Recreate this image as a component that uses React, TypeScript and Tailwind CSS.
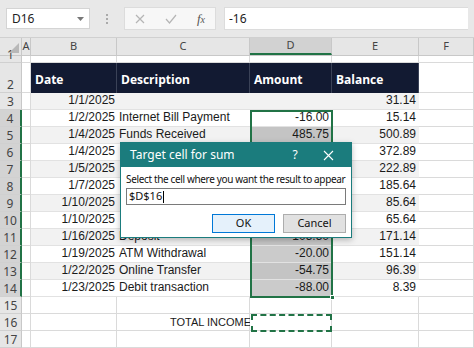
import React from "react";

const cols = [
  { key: "A", w: "w-[9px]" },
  { key: "B", w: "w-[86px]" },
  { key: "C", w: "w-[133px]" },
  { key: "D", w: "w-[82px]" },
  { key: "E", w: "w-[87px]" },
  { key: "F", w: "flex-1" },
];

type Row = { n: number; date: string; desc: string; amt: string; bal: string };

// rows 6-10 sit under the dialog, so only their dates and balances show
const rows: Row[] = [
  { n: 3, date: "1/1/2025", desc: "", amt: "", bal: "31.14" },
  { n: 4, date: "1/2/2025", desc: "Internet Bill Payment", amt: "-16.00", bal: "15.14" },
  { n: 5, date: "1/4/2025", desc: "Funds Received", amt: "485.75", bal: "500.89" },
  { n: 6, date: "1/4/2025", desc: "", amt: "", bal: "372.89" },
  { n: 7, date: "1/5/2025", desc: "", amt: "", bal: "222.89" },
  { n: 8, date: "1/7/2025", desc: "", amt: "", bal: "185.64" },
  { n: 9, date: "1/10/2025", desc: "", amt: "", bal: "85.64" },
  { n: 10, date: "1/10/2025", desc: "", amt: "", bal: "65.64" },
  { n: 11, date: "1/16/2025", desc: "Deposit", amt: "105.50", bal: "171.14" },
  { n: 12, date: "1/19/2025", desc: "ATM Withdrawal", amt: "-20.00", bal: "151.14" },
  { n: 13, date: "1/22/2025", desc: "Online Transfer", amt: "-54.75", bal: "96.39" },
  { n: 14, date: "1/23/2025", desc: "Debit transaction", amt: "-88.00", bal: "8.39" },
];

const cell = "font-['Liberation_Sans',sans-serif] text-[12px] text-[#1a1a1a]";

function RowHead({ n, h, sel }: { n: string; h: string; sel?: boolean }) {
  return (
    <div
      className={`${h} w-[22px] shrink-0 flex items-end justify-center pb-[1px] text-[12px] font-['Noto_Sans',sans-serif] leading-none text-[#444] border-b border-[#d0d0d0] ${
        sel ? "bg-[#d3d3d3] border-r-2 border-r-[#217346]" : "bg-[#e6e6e6] border-r border-r-[#c8c8c8]"
      }`}
    >
      {n}
    </div>
  );
}

function Blank({ w, h }: { w: string; h: string }) {
  return <div className={`${w} ${h} shrink-0 bg-white border-r border-b border-[#dadada]`} />;
}

export default function App() {
  return (
    <div className="w-[474px] h-[348px] overflow-hidden bg-white relative select-none">
      {/* formula bar */}
      <div className="h-[38px] bg-[#e8e8e8] flex items-center gap-2 px-[6px] border-b border-[#d0d0d0]">
        <div className="w-[84px] h-[21px] bg-white border border-[#d4d4d4] flex items-center justify-between px-[5px]">
          <span className="font-['Noto_Sans',sans-serif] text-[12px] text-[#222]">D16</span>
          <svg width="7" height="4" viewBox="0 0 7 4">
            <path d="M0 0h7L3.5 4z" fill="#777" />
          </svg>
        </div>
        <div className="w-[18px] flex flex-col items-center gap-[2px]">
          <span className="w-[2px] h-[2px] bg-[#aaa]" />
          <span className="w-[2px] h-[2px] bg-[#aaa]" />
          <span className="w-[2px] h-[2px] bg-[#aaa]" />
        </div>
        <div className="w-[92px] h-[23px] bg-[#f7f7f7] border border-[#dcdcdc] flex items-center justify-around">
          <svg width="10" height="10" viewBox="0 0 10 10">
            <path d="M1 1l8 8M9 1l-8 8" stroke="#b5b5b5" strokeWidth="1.2" />
          </svg>
          <svg width="12" height="10" viewBox="0 0 12 10">
            <path d="M1 5l3.5 4L11 1" stroke="#b5b5b5" strokeWidth="1.2" fill="none" />
          </svg>
          <span className="font-['Liberation_Serif',serif] italic text-[13px] text-[#555]">
            f<span className="text-[10px]">x</span>
          </span>
        </div>
        <div className="flex-1 h-[23px] bg-white border border-[#dcdcdc] border-r-0 flex items-center px-[4px]">
          <span className="font-['Noto_Sans',sans-serif] text-[12px] text-[#222]">-16</span>
        </div>
      </div>

      {/* column headers */}
      <div className="h-[18px] flex bg-[#e6e6e6] border-b border-[#c8c8c8]">
        <div className="w-[22px] shrink-0 relative border-r border-[#c8c8c8]">
          <svg className="absolute right-[2px] bottom-[2px]" width="10" height="10" viewBox="0 0 10 10">
            <path d="M10 0v10H0z" fill="#b8b8b8" />
          </svg>
        </div>
        {cols.map((c) => (
          <div
            key={c.key}
            className={`${c.w} shrink-0 flex items-center justify-center text-[11px] font-['Noto_Sans',sans-serif] text-[#444] border-r border-[#c8c8c8] ${
              c.key === "D" ? "bg-[#d2d2d2] border-b-2 border-b-[#217346]" : ""
            }`}
          >
            {c.key}
          </div>
        ))}
      </div>

      {/* row 1 */}
      <div className="flex">
        <RowHead n="1" h="h-[7px]" />
        {cols.map((c) => (
          <Blank key={c.key} w={c.w} h="h-[7px]" />
        ))}
      </div>

      {/* row 2 header */}
      <div className="flex">
        <RowHead n="2" h="h-[30px]" />
        <Blank w="w-[9px]" h="h-[30px]" />
        {["Date", "Description", "Amount", "Balance"].map((t, i) => (
          <div
            key={t}
            className={`${["w-[86px]", "w-[133px]", "w-[82px]", "w-[87px]"][i]} h-[30px] shrink-0 bg-[#121a32] border-r border-[#3a4257] flex items-center pt-[3px] px-[4px] font-['Open_Sans',sans-serif] font-bold text-[12px] text-white`}
          >
            {t}
          </div>
        ))}
        <Blank w="flex-1" h="h-[30px]" />
      </div>

      {/* data rows */}
      {rows.map((r) => {
        const band = r.n % 2 === 1 ? "bg-[#f2f2f2]" : "bg-white";
        const selAmt = r.n >= 5 && r.n <= 14;
        return (
          <div key={r.n} className="flex">
            <RowHead n={String(r.n)} h="h-[17px]" sel={r.n >= 4} />
            <Blank w="w-[9px]" h="h-[17px]" />
            <div className={`w-[86px] h-[17px] shrink-0 ${band} border-b border-[#e2e2e2] flex items-end justify-end px-[2px] ${cell}`}>
              {r.date}
            </div>
            <div className={`w-[133px] h-[17px] shrink-0 ${band} border-b border-[#e2e2e2] flex items-end px-[2px] whitespace-nowrap ${cell}`}>
              {r.desc}
            </div>
            <div
              className={`w-[82px] h-[17px] shrink-0 ${selAmt ? (r.n % 2 === 1 ? "bg-[#c4c4c4]" : "bg-[#cbcbcb]") : band} border-b border-[#e2e2e2] flex items-end justify-end px-[3px] ${cell}`}
            >
              {r.amt}
            </div>
            <div className={`w-[87px] h-[17px] shrink-0 ${band} border-b border-[#e2e2e2] flex items-end justify-end px-[3px] ${cell}`}>
              {r.bal}
            </div>
            <Blank w="flex-1" h="h-[17px]" />
          </div>
        );
      })}

      {/* rows 15-17 */}
      {[15, 16, 17].map((n) => (
        <div key={n} className="flex">
          <RowHead n={String(n)} h="h-[17px]" />
          <Blank w="w-[9px]" h="h-[17px]" />
          <Blank w="w-[86px]" h="h-[17px]" />
          <div className="w-[133px] h-[17px] shrink-0 bg-white border-r border-b border-[#dadada] flex items-end justify-end whitespace-nowrap font-['Liberation_Sans',sans-serif] text-[11px] text-[#1a1a1a]">
            {n === 16 ? <span className="-mr-[2px]">TOTAL INCOME</span> : ""}
          </div>
          <Blank w="w-[82px]" h="h-[17px]" />
          <Blank w="w-[87px]" h="h-[17px]" />
          <Blank w="flex-1" h="h-[17px]" />
        </div>
      ))}

      {/* selection D4:D14 */}
      <div className="absolute left-[250px] top-[110px] w-[83px] h-[188px] border-2 border-[#217346] pointer-events-none" />
      <div className="absolute left-[330px] top-[295px] w-[5px] h-[5px] bg-[#217346] border border-white" />
      {/* copy marquee D16 */}
      <div className="absolute left-[251px] top-[314px] w-[81px] h-[18px] border-2 border-dashed border-[#217346]" />

      {/* dialog */}
      <div className="absolute left-[120px] top-[142px] w-[232px] h-[96px] border border-[#1b7c7d] bg-white shadow-[0_2px_6px_rgba(0,0,0,0.25)] font-['Noto_Sans',sans-serif]">
        <div className="h-[24px] bg-[#1b7c7d] flex items-center pl-[9px] text-white text-[12px]">
          <span className="flex-1">Target cell for sum</span>
          <span className="w-[20px] text-center text-[12px]">?</span>
          <span className="w-[46px] flex justify-center">
            <svg width="11" height="11" viewBox="0 0 11 11">
              <path d="M1 1l9 9M10 1l-9 9" stroke="white" strokeWidth="1.1" />
            </svg>
          </span>
        </div>
        <div className="px-[5px] pt-[5px]">
          <div className="text-[10px] tracking-[-0.35px] text-[#111] leading-[14px] whitespace-nowrap">
            Select the cell where you want the result to appear
          </div>
          <div className="mt-[2px] h-[17px] border border-[#7a7a7a] flex items-center px-[2px] text-[11px] text-[#111]">
            $D$16<span className="w-px h-[12px] bg-black ml-px" />
          </div>
          <div className="mt-[9px] flex justify-end gap-[8px]">
            <div className="w-[63px] h-[19px] border border-[#0078d7] bg-[#e5f1fb] flex items-center justify-center text-[11px] text-[#111]">
              OK
            </div>
            <div className="w-[63px] h-[19px] border border-[#adadad] bg-[#e1e1e1] flex items-center justify-center text-[11px] text-[#111]">
              Cancel
            </div>
          </div>
        </div>
      </div>
    </div>
  );
}
